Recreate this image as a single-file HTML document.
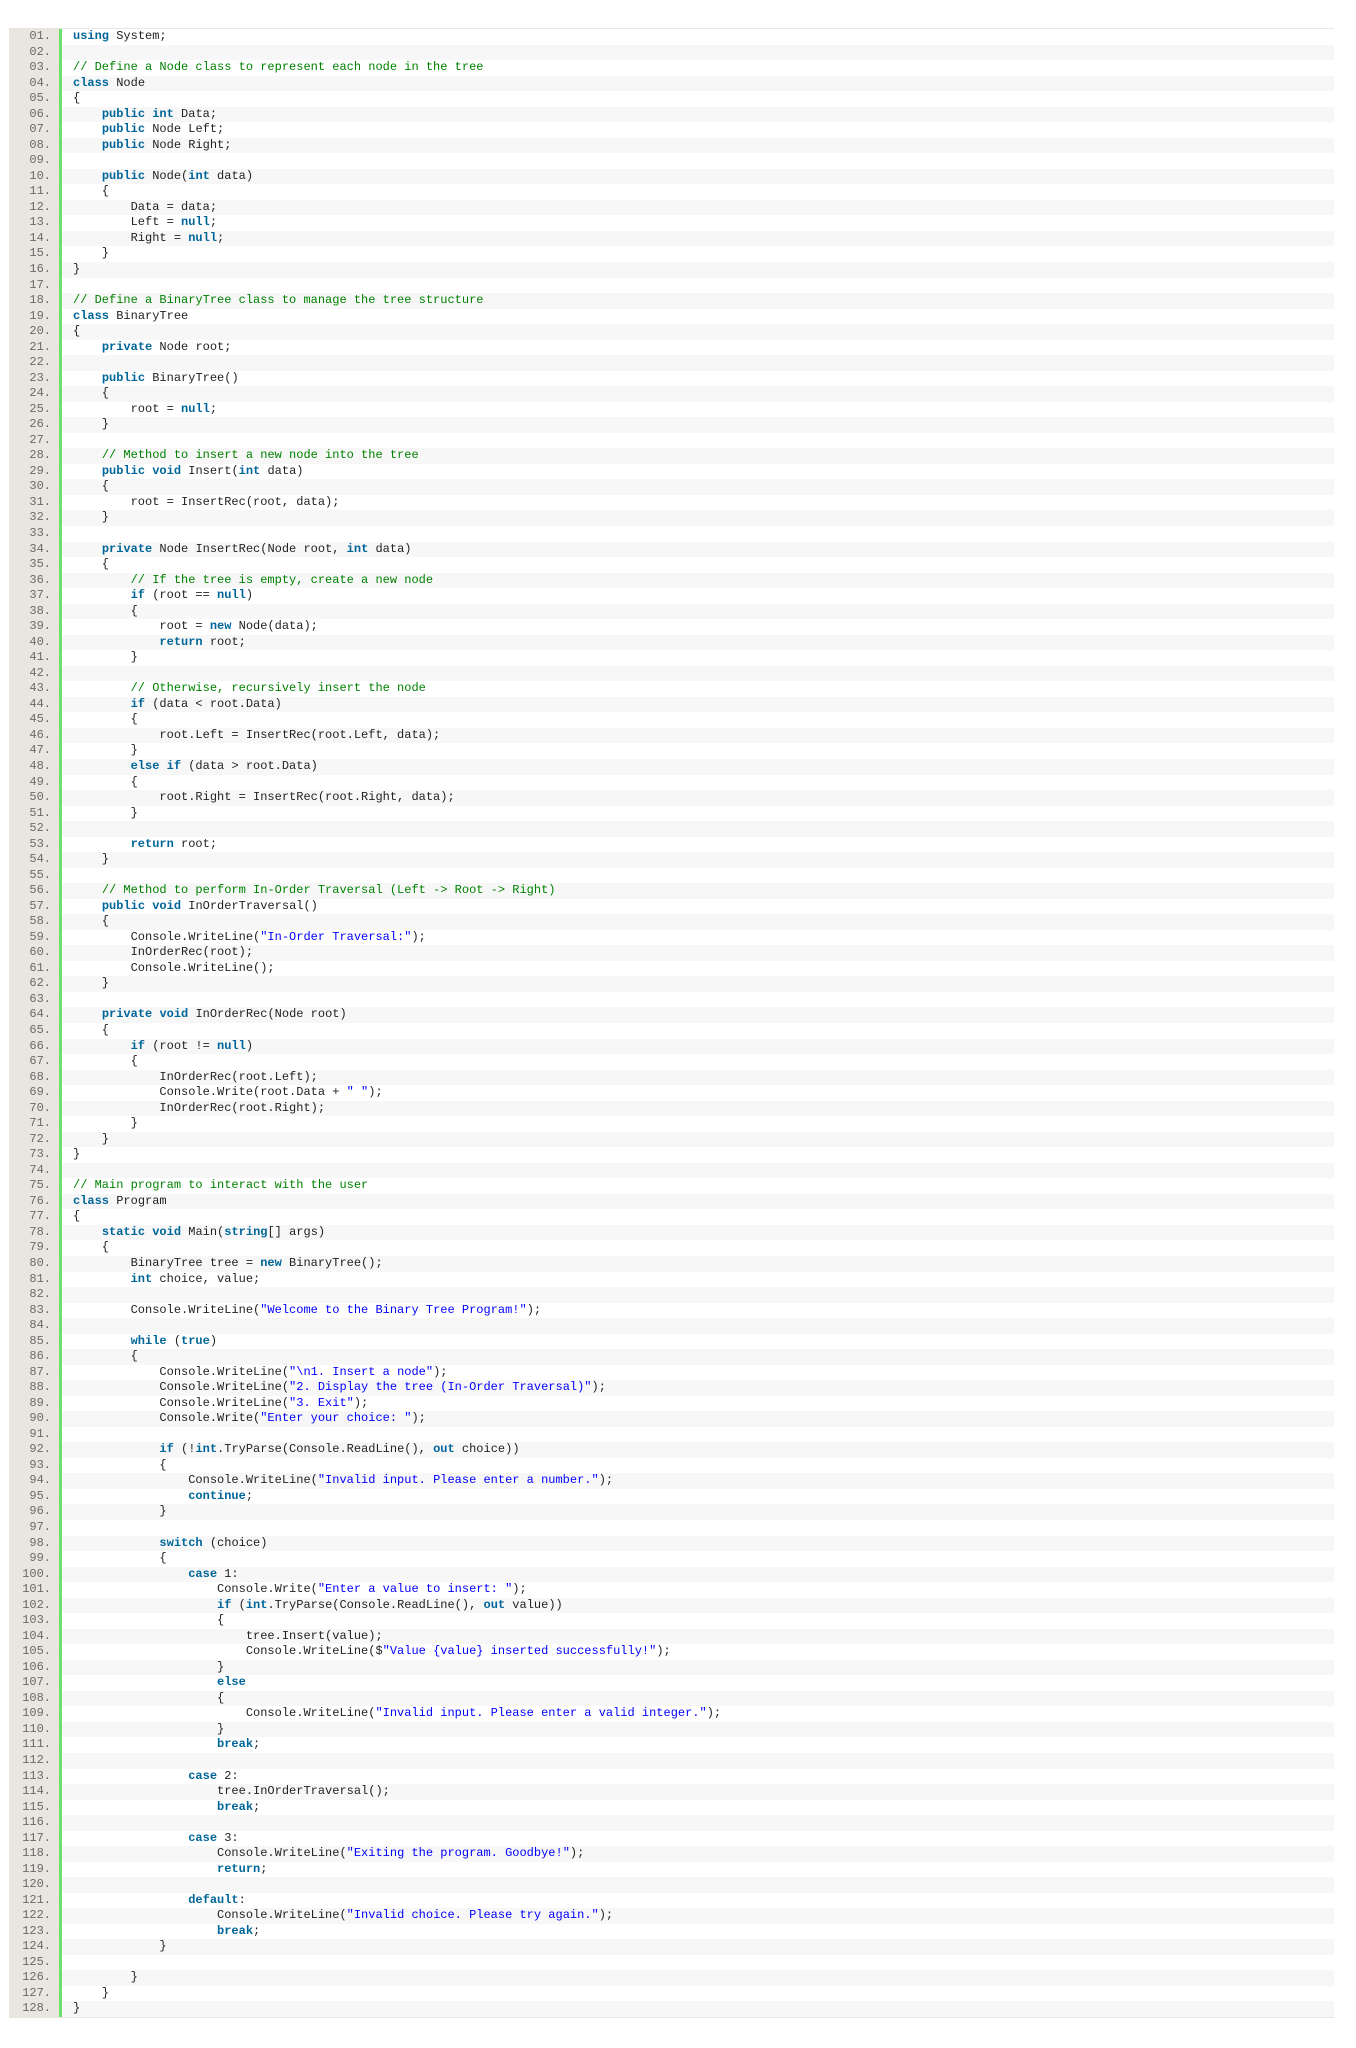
<!DOCTYPE html>
<html><head><meta charset="utf-8"><style>
body{margin:0;background:#fff;width:1356px;height:2048px;position:relative;overflow:hidden}
#c{position:absolute;left:9px;top:29px;width:1325px;border-top:1px solid #e8e6df;border-bottom:1px solid #e8e6df;margin-top:-1px}
.l{display:flex;height:15.54px;line-height:15.54px;font-family:"Liberation Mono",monospace;font-size:12px;color:#222;white-space:pre}
.l:nth-child(even){background:#f7f7f7}
.n{width:50px;background:#e8e6df;color:#6a6a6a;text-align:right;padding-right:0;box-sizing:border-box;padding-right:8px;flex:none}
.t{border-left:3px solid #6ce26c;padding-left:11px;flex:1}
b{color:#006699}
i{font-style:normal;color:#008200}
s{text-decoration:none;color:#0000ff}
</style></head><body><div id="c">
<div class="l"><span class="n">01.</span><span class="t"><b>using</b> System;</span></div>
<div class="l"><span class="n">02.</span><span class="t"> </span></div>
<div class="l"><span class="n">03.</span><span class="t"><i>// Define a Node class to represent each node in the tree</i></span></div>
<div class="l"><span class="n">04.</span><span class="t"><b>class</b> Node</span></div>
<div class="l"><span class="n">05.</span><span class="t">{</span></div>
<div class="l"><span class="n">06.</span><span class="t">    <b>public</b> <b>int</b> Data;</span></div>
<div class="l"><span class="n">07.</span><span class="t">    <b>public</b> Node Left;</span></div>
<div class="l"><span class="n">08.</span><span class="t">    <b>public</b> Node Right;</span></div>
<div class="l"><span class="n">09.</span><span class="t"> </span></div>
<div class="l"><span class="n">10.</span><span class="t">    <b>public</b> Node(<b>int</b> data)</span></div>
<div class="l"><span class="n">11.</span><span class="t">    {</span></div>
<div class="l"><span class="n">12.</span><span class="t">        Data = data;</span></div>
<div class="l"><span class="n">13.</span><span class="t">        Left = <b>null</b>;</span></div>
<div class="l"><span class="n">14.</span><span class="t">        Right = <b>null</b>;</span></div>
<div class="l"><span class="n">15.</span><span class="t">    }</span></div>
<div class="l"><span class="n">16.</span><span class="t">}</span></div>
<div class="l"><span class="n">17.</span><span class="t"> </span></div>
<div class="l"><span class="n">18.</span><span class="t"><i>// Define a BinaryTree class to manage the tree structure</i></span></div>
<div class="l"><span class="n">19.</span><span class="t"><b>class</b> BinaryTree</span></div>
<div class="l"><span class="n">20.</span><span class="t">{</span></div>
<div class="l"><span class="n">21.</span><span class="t">    <b>private</b> Node root;</span></div>
<div class="l"><span class="n">22.</span><span class="t"> </span></div>
<div class="l"><span class="n">23.</span><span class="t">    <b>public</b> BinaryTree()</span></div>
<div class="l"><span class="n">24.</span><span class="t">    {</span></div>
<div class="l"><span class="n">25.</span><span class="t">        root = <b>null</b>;</span></div>
<div class="l"><span class="n">26.</span><span class="t">    }</span></div>
<div class="l"><span class="n">27.</span><span class="t"> </span></div>
<div class="l"><span class="n">28.</span><span class="t">    <i>// Method to insert a new node into the tree</i></span></div>
<div class="l"><span class="n">29.</span><span class="t">    <b>public</b> <b>void</b> Insert(<b>int</b> data)</span></div>
<div class="l"><span class="n">30.</span><span class="t">    {</span></div>
<div class="l"><span class="n">31.</span><span class="t">        root = InsertRec(root, data);</span></div>
<div class="l"><span class="n">32.</span><span class="t">    }</span></div>
<div class="l"><span class="n">33.</span><span class="t"> </span></div>
<div class="l"><span class="n">34.</span><span class="t">    <b>private</b> Node InsertRec(Node root, <b>int</b> data)</span></div>
<div class="l"><span class="n">35.</span><span class="t">    {</span></div>
<div class="l"><span class="n">36.</span><span class="t">        <i>// If the tree is empty, create a new node</i></span></div>
<div class="l"><span class="n">37.</span><span class="t">        <b>if</b> (root == <b>null</b>)</span></div>
<div class="l"><span class="n">38.</span><span class="t">        {</span></div>
<div class="l"><span class="n">39.</span><span class="t">            root = <b>new</b> Node(data);</span></div>
<div class="l"><span class="n">40.</span><span class="t">            <b>return</b> root;</span></div>
<div class="l"><span class="n">41.</span><span class="t">        }</span></div>
<div class="l"><span class="n">42.</span><span class="t"> </span></div>
<div class="l"><span class="n">43.</span><span class="t">        <i>// Otherwise, recursively insert the node</i></span></div>
<div class="l"><span class="n">44.</span><span class="t">        <b>if</b> (data &lt; root.Data)</span></div>
<div class="l"><span class="n">45.</span><span class="t">        {</span></div>
<div class="l"><span class="n">46.</span><span class="t">            root.Left = InsertRec(root.Left, data);</span></div>
<div class="l"><span class="n">47.</span><span class="t">        }</span></div>
<div class="l"><span class="n">48.</span><span class="t">        <b>else</b> <b>if</b> (data &gt; root.Data)</span></div>
<div class="l"><span class="n">49.</span><span class="t">        {</span></div>
<div class="l"><span class="n">50.</span><span class="t">            root.Right = InsertRec(root.Right, data);</span></div>
<div class="l"><span class="n">51.</span><span class="t">        }</span></div>
<div class="l"><span class="n">52.</span><span class="t"> </span></div>
<div class="l"><span class="n">53.</span><span class="t">        <b>return</b> root;</span></div>
<div class="l"><span class="n">54.</span><span class="t">    }</span></div>
<div class="l"><span class="n">55.</span><span class="t"> </span></div>
<div class="l"><span class="n">56.</span><span class="t">    <i>// Method to perform In-Order Traversal (Left -&gt; Root -&gt; Right)</i></span></div>
<div class="l"><span class="n">57.</span><span class="t">    <b>public</b> <b>void</b> InOrderTraversal()</span></div>
<div class="l"><span class="n">58.</span><span class="t">    {</span></div>
<div class="l"><span class="n">59.</span><span class="t">        Console.WriteLine(<s>"In-Order Traversal:"</s>);</span></div>
<div class="l"><span class="n">60.</span><span class="t">        InOrderRec(root);</span></div>
<div class="l"><span class="n">61.</span><span class="t">        Console.WriteLine();</span></div>
<div class="l"><span class="n">62.</span><span class="t">    }</span></div>
<div class="l"><span class="n">63.</span><span class="t"> </span></div>
<div class="l"><span class="n">64.</span><span class="t">    <b>private</b> <b>void</b> InOrderRec(Node root)</span></div>
<div class="l"><span class="n">65.</span><span class="t">    {</span></div>
<div class="l"><span class="n">66.</span><span class="t">        <b>if</b> (root != <b>null</b>)</span></div>
<div class="l"><span class="n">67.</span><span class="t">        {</span></div>
<div class="l"><span class="n">68.</span><span class="t">            InOrderRec(root.Left);</span></div>
<div class="l"><span class="n">69.</span><span class="t">            Console.Write(root.Data + <s>" "</s>);</span></div>
<div class="l"><span class="n">70.</span><span class="t">            InOrderRec(root.Right);</span></div>
<div class="l"><span class="n">71.</span><span class="t">        }</span></div>
<div class="l"><span class="n">72.</span><span class="t">    }</span></div>
<div class="l"><span class="n">73.</span><span class="t">}</span></div>
<div class="l"><span class="n">74.</span><span class="t"> </span></div>
<div class="l"><span class="n">75.</span><span class="t"><i>// Main program to interact with the user</i></span></div>
<div class="l"><span class="n">76.</span><span class="t"><b>class</b> Program</span></div>
<div class="l"><span class="n">77.</span><span class="t">{</span></div>
<div class="l"><span class="n">78.</span><span class="t">    <b>static</b> <b>void</b> Main(<b>string</b>[] args)</span></div>
<div class="l"><span class="n">79.</span><span class="t">    {</span></div>
<div class="l"><span class="n">80.</span><span class="t">        BinaryTree tree = <b>new</b> BinaryTree();</span></div>
<div class="l"><span class="n">81.</span><span class="t">        <b>int</b> choice, value;</span></div>
<div class="l"><span class="n">82.</span><span class="t"> </span></div>
<div class="l"><span class="n">83.</span><span class="t">        Console.WriteLine(<s>"Welcome to the Binary Tree Program!"</s>);</span></div>
<div class="l"><span class="n">84.</span><span class="t"> </span></div>
<div class="l"><span class="n">85.</span><span class="t">        <b>while</b> (<b>true</b>)</span></div>
<div class="l"><span class="n">86.</span><span class="t">        {</span></div>
<div class="l"><span class="n">87.</span><span class="t">            Console.WriteLine(<s>"\n1. Insert a node"</s>);</span></div>
<div class="l"><span class="n">88.</span><span class="t">            Console.WriteLine(<s>"2. Display the tree (In-Order Traversal)"</s>);</span></div>
<div class="l"><span class="n">89.</span><span class="t">            Console.WriteLine(<s>"3. Exit"</s>);</span></div>
<div class="l"><span class="n">90.</span><span class="t">            Console.Write(<s>"Enter your choice: "</s>);</span></div>
<div class="l"><span class="n">91.</span><span class="t"> </span></div>
<div class="l"><span class="n">92.</span><span class="t">            <b>if</b> (!<b>int</b>.TryParse(Console.ReadLine(), <b>out</b> choice))</span></div>
<div class="l"><span class="n">93.</span><span class="t">            {</span></div>
<div class="l"><span class="n">94.</span><span class="t">                Console.WriteLine(<s>"Invalid input. Please enter a number."</s>);</span></div>
<div class="l"><span class="n">95.</span><span class="t">                <b>continue</b>;</span></div>
<div class="l"><span class="n">96.</span><span class="t">            }</span></div>
<div class="l"><span class="n">97.</span><span class="t"> </span></div>
<div class="l"><span class="n">98.</span><span class="t">            <b>switch</b> (choice)</span></div>
<div class="l"><span class="n">99.</span><span class="t">            {</span></div>
<div class="l"><span class="n">100.</span><span class="t">                <b>case</b> 1:</span></div>
<div class="l"><span class="n">101.</span><span class="t">                    Console.Write(<s>"Enter a value to insert: "</s>);</span></div>
<div class="l"><span class="n">102.</span><span class="t">                    <b>if</b> (<b>int</b>.TryParse(Console.ReadLine(), <b>out</b> value))</span></div>
<div class="l"><span class="n">103.</span><span class="t">                    {</span></div>
<div class="l"><span class="n">104.</span><span class="t">                        tree.Insert(value);</span></div>
<div class="l"><span class="n">105.</span><span class="t">                        Console.WriteLine($<s>"Value {value} inserted successfully!"</s>);</span></div>
<div class="l"><span class="n">106.</span><span class="t">                    }</span></div>
<div class="l"><span class="n">107.</span><span class="t">                    <b>else</b></span></div>
<div class="l"><span class="n">108.</span><span class="t">                    {</span></div>
<div class="l"><span class="n">109.</span><span class="t">                        Console.WriteLine(<s>"Invalid input. Please enter a valid integer."</s>);</span></div>
<div class="l"><span class="n">110.</span><span class="t">                    }</span></div>
<div class="l"><span class="n">111.</span><span class="t">                    <b>break</b>;</span></div>
<div class="l"><span class="n">112.</span><span class="t"> </span></div>
<div class="l"><span class="n">113.</span><span class="t">                <b>case</b> 2:</span></div>
<div class="l"><span class="n">114.</span><span class="t">                    tree.InOrderTraversal();</span></div>
<div class="l"><span class="n">115.</span><span class="t">                    <b>break</b>;</span></div>
<div class="l"><span class="n">116.</span><span class="t"> </span></div>
<div class="l"><span class="n">117.</span><span class="t">                <b>case</b> 3:</span></div>
<div class="l"><span class="n">118.</span><span class="t">                    Console.WriteLine(<s>"Exiting the program. Goodbye!"</s>);</span></div>
<div class="l"><span class="n">119.</span><span class="t">                    <b>return</b>;</span></div>
<div class="l"><span class="n">120.</span><span class="t"> </span></div>
<div class="l"><span class="n">121.</span><span class="t">                <b>default</b>:</span></div>
<div class="l"><span class="n">122.</span><span class="t">                    Console.WriteLine(<s>"Invalid choice. Please try again."</s>);</span></div>
<div class="l"><span class="n">123.</span><span class="t">                    <b>break</b>;</span></div>
<div class="l"><span class="n">124.</span><span class="t">            }</span></div>
<div class="l"><span class="n">125.</span><span class="t"> </span></div>
<div class="l"><span class="n">126.</span><span class="t">        }</span></div>
<div class="l"><span class="n">127.</span><span class="t">    }</span></div>
<div class="l"><span class="n">128.</span><span class="t">}</span></div>
</div></body></html>
